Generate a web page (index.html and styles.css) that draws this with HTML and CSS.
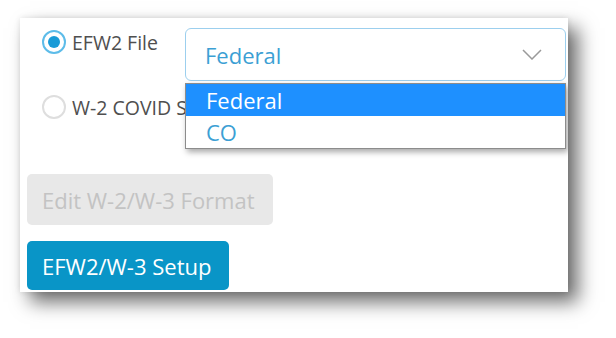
FILE: index.html
```html
<!DOCTYPE html>
<html>
<head>
<meta charset="utf-8">
<link rel="stylesheet" href="styles.css">
</head>
<body>
<div class="frame">
  <div class="panel">
    <div class="row-top">
      <label class="opt">
        <span class="radio checked"><span class="dot"></span></span>
        <span class="lbl">EFW2 File</span>
      </label>
      <div class="select-wrap">
        <div class="select">
          <span>Federal</span>
          <svg class="chev" width="20" height="11" viewBox="0 0 20 11"><polyline points="1,1 10,10 19,1" fill="none" stroke="#9a9a9a" stroke-width="1.5"/></svg>
        </div>
        <ul class="list">
          <li class="active">Federal</li>
          <li>CO</li>
        </ul>
      </div>
    </div>
    <div class="row-2">
      <label class="opt">
        <span class="radio"></span>
        <span class="lbl">W-2 COVID S</span>
      </label>
    </div>
    <button class="btn btn-disabled">Edit W-2/W-3 Format</button>
    <button class="btn btn-primary">EFW2/W-3 Setup</button>
  </div>
</div>
</body>
</html>
```
FILE: styles.css
```css
html, body {
  margin: 0;
  padding: 0;
  background: #ffffff;
}
body {
  width: 616px;
  height: 338px;
  overflow: hidden;
  font-family: "Open Sans", "DejaVu Sans", sans-serif;
}
.frame {
  padding: 18px 0 0 20px;
}
.panel {
  position: relative;
  width: 548px;
  height: 274px;
  box-sizing: border-box;
  background: #ffffff;
  padding: 10px 0 0 7px;
  display: flex;
  flex-direction: column;
  align-items: flex-start;
  box-shadow: 10px 10px 18px rgba(0, 0, 0, 0.58), 0 0 6px rgba(0, 0, 0, 0.1);
  overflow: hidden;
}
.row-top {
  display: flex;
  align-items: flex-start;
}
.opt {
  display: flex;
  align-items: center;
  box-sizing: border-box;
  padding-left: 15px;
  height: 24px;
  width: 158px;
  font-size: 19.5px;
  color: #4f4f4f;
  white-space: nowrap;
}
.row-top .opt {
  margin-top: 2px;
}
.radio {
  width: 24px;
  height: 24px;
  box-sizing: border-box;
  border-radius: 50%;
  border: 2px solid #dedede;
  display: flex;
  align-items: center;
  justify-content: center;
  flex: none;
}
.radio.checked {
  border-color: #5dbce9;
}
.dot {
  width: 12px;
  height: 12px;
  border-radius: 50%;
  background: #1a9bd7;
}
.lbl {
  margin-left: 6px;
}
.select-wrap {
  position: relative;
  width: 381px;
}
.select {
  height: 53px;
  box-sizing: border-box;
  border: 1px solid #9ccfee;
  border-radius: 6px;
  display: flex;
  align-items: center;
  justify-content: space-between;
  padding: 0 23px 0 19px;
  font-size: 22px;
  color: #3c9fd4;
  background: #fff;
}
.chev {
  display: block;
}
.list {
  position: absolute;
  left: 0;
  top: 55px;
  width: 381px;
  box-sizing: border-box;
  margin: 0;
  padding: 0;
  list-style: none;
  border: 1px solid #8c8c8c;
  background: #fff;
  box-shadow: 2px 3px 6px rgba(0, 0, 0, 0.35);
}
.list li {
  height: 32px;
  line-height: 32px;
  padding-left: 20px;
  font-size: 22px;
  color: #3c9fd4;
}
.list li.active {
  background: #1e90ff;
  color: #ffffff;
}
.row-2 {
  margin-top: 14px;
}
.btn {
  font-family: "Open Sans", "DejaVu Sans", sans-serif;
  font-size: 22px;
  height: 51px;
  border: none;
  border-radius: 5px;
  padding: 0 18px 0 15px;
  text-align: left;
}
.btn-disabled {
  margin-top: 55px;
  background: #e8e8e8;
  color: #c3c3c3;
}
.btn-primary {
  margin-top: 16px;
  height: 49px;
  background: #0995c7;
  color: #ffffff;
}
```
